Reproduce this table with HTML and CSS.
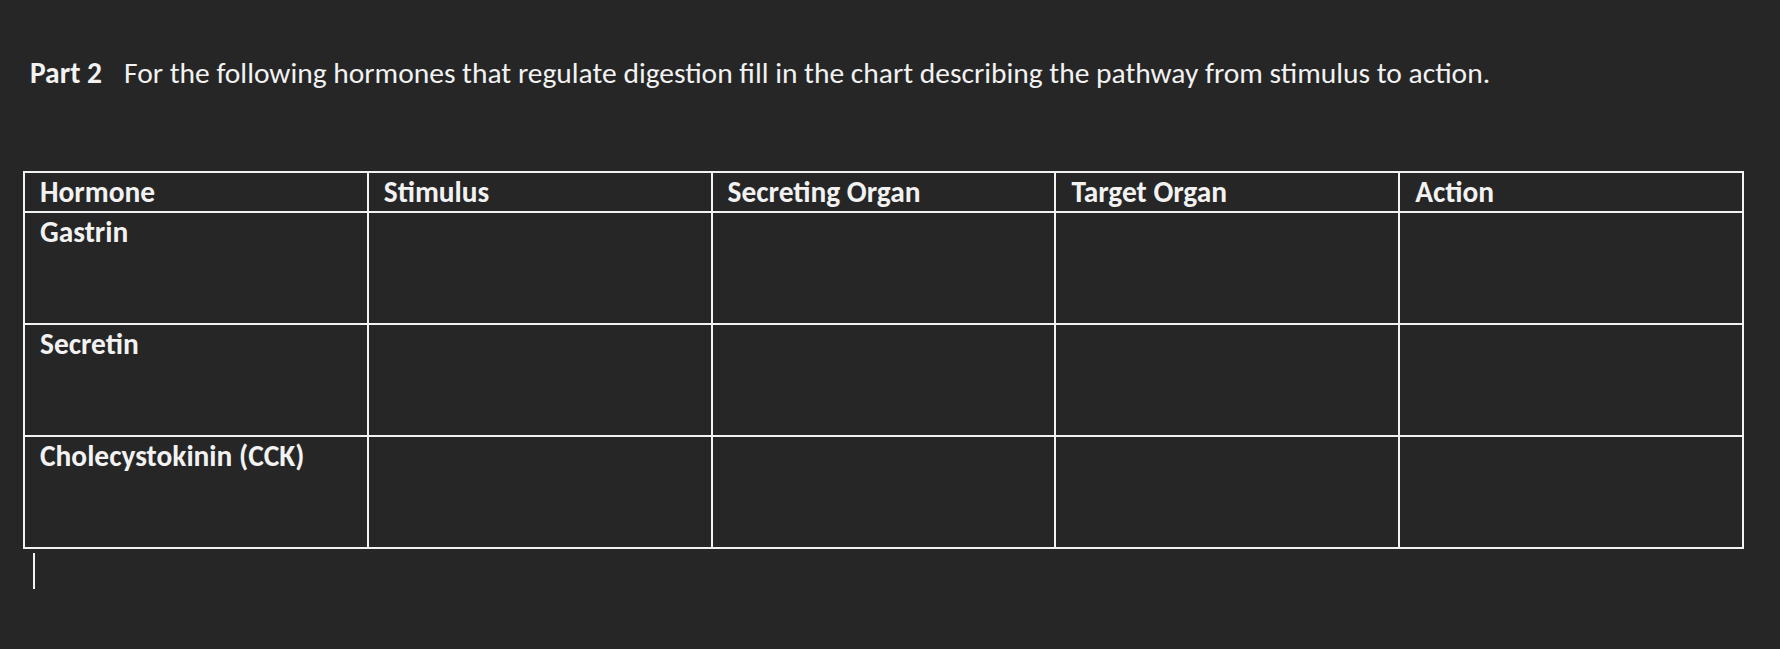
FILE: index.html
```html
<!DOCTYPE html>
<html>
<head>
<meta charset="utf-8">
<link rel="stylesheet" href="styles.css">
</head>
<body>
<div class="page">
  <p class="title"><b>Part 2</b><span class="gap"></span>For the following hormones that regulate digestion fill in the chart describing the pathway from stimulus to action.</p>
  <table class="chart">
    <colgroup><col><col><col><col><col></colgroup>
    <tr class="head">
      <td>Hormone</td><td>Stimulus</td><td>Secreting Organ</td><td>Target Organ</td><td>Action</td>
    </tr>
    <tr class="row"><td>Gastrin</td><td></td><td></td><td></td><td></td></tr>
    <tr class="row"><td>Secretin</td><td></td><td></td><td></td><td></td></tr>
    <tr class="row"><td>Cholecystokinin (CCK)</td><td></td><td></td><td></td><td></td></tr>
  </table>
  <div class="cursor"></div>
</div>
</body>
</html>
```
FILE: styles.css
```css
html, body {
  margin: 0;
  padding: 0;
  background: #262626;
}
.page {
  width: 1780px;
  height: 649px;
  font-family: Carlito, "Open Sans", "Liberation Sans", sans-serif;
  color: #f2f2f2;
  padding: 56px 0 0 30px;
  box-sizing: border-box;
}
.title {
  margin: 0;
  font-size: 29.5px;
  line-height: 34px;
}
.title b { font-weight: bold; }
.gap { display: inline-block; width: 22px; }
.chart {
  margin: 81px 0 0 -7px;
  border-collapse: collapse;
  table-layout: fixed;
  width: 1721px;
  font-size: 29.4px;
  font-weight: bold;
}
.chart td {
  border: 2px solid #f2f2f2;
  padding: 4px 15px 0 15px;
  vertical-align: top;
  line-height: 30px;
}
.chart .head td { height: 40px; box-sizing: border-box; }
.chart .row td { height: 112px; box-sizing: border-box; }
.cursor {
  width: 2px;
  height: 36px;
  background: #f2f2f2;
  margin: 4px 0 0 3px;
}
```
